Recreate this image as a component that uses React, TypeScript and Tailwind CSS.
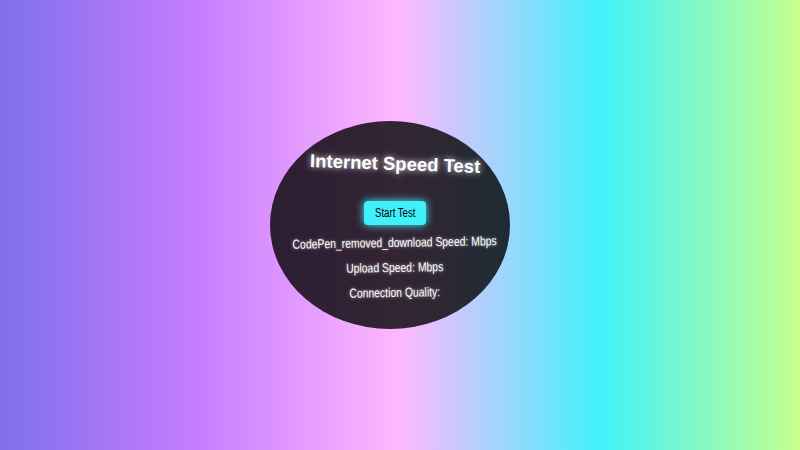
export default function App() {
  return (
    <div
      className="flex h-[450px] w-full items-center justify-center bg-[linear-gradient(to_right,#7f6fea,#c77dff,#ffb8ff,#41f2fa,#c6ff8e)] pr-[20px]"
      style={{ fontFamily: '"Liberation Sans", Arial, sans-serif' }}
    >
      <div className="flex h-[208px] w-[240px] flex-col items-center rounded-[50%] bg-black/80 pl-[10px] pt-[31px] text-white">
        <h1 className="rotate-2 whitespace-nowrap text-[18.5px] leading-[24px] font-bold [text-shadow:0_0_6px_rgba(255,255,255,0.9)]">
          Internet Speed Test
        </h1>
        <button className="mt-[25px] flex h-[24px] w-[62px] items-center justify-center rounded-[4px] bg-[#41f0fa] text-[12px] text-black shadow-[0_0_8px_#41f0fa]">
          <span className="inline-block scale-x-[0.8] whitespace-nowrap">Start Test</span>
        </button>
        <p className="mt-[10px] -rotate-1 scale-x-[0.8] whitespace-nowrap text-[13px] leading-[16px] [text-shadow:0_0_4px_rgba(255,255,255,0.6)]">
          CodePen_removed_download Speed: Mbps
        </p>
        <p className="mt-[9px] -rotate-1 scale-x-[0.8] whitespace-nowrap text-[13px] leading-[16px] [text-shadow:0_0_4px_rgba(255,255,255,0.6)]">
          Upload Speed: Mbps
        </p>
        <p className="mt-[9px] -rotate-1 scale-x-[0.8] whitespace-nowrap text-[13px] leading-[16px] [text-shadow:0_0_4px_rgba(255,255,255,0.6)]">
          Connection Quality:
        </p>
      </div>
    </div>
  );
}
